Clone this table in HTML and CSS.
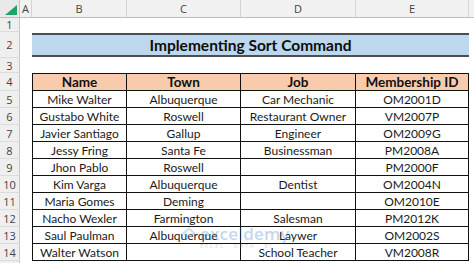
FILE: index.html
```html
<!DOCTYPE html>
<html>
<head>
<meta charset="utf-8">
<link rel="stylesheet" href="styles.css">
</head>
<body>
<div class="sheet">
  <div class="corner"><svg class="tri" width="12" height="10" viewBox="0 0 12 10"><polygon points="12,0 12,10 0,10" fill="#21a366"/></svg></div>
  <div class="ch">A</div><div class="ch">B</div><div class="ch">C</div><div class="ch">D</div><div class="ch">E</div><div class="ch last"></div>

  <div class="rh">1</div><div class="blank full"></div>

  <div class="rh">2</div><div class="blank"></div><div class="title-cell"><div class="title">Implementing Sort Command</div></div><div class="blank"></div>

  <div class="rh">3</div><div class="blank full"></div>

  <div class="rh">4</div><div class="blank"></div>
  <div class="th first">Name</div><div class="th">Town</div><div class="th">Job</div><div class="th">Membership ID</div><div class="blank"></div>

  <div class="rh">5</div><div class="blank"></div>
  <div class="td first">Mike Walter</div><div class="td">Albuquerque</div><div class="td">Car Mechanic</div><div class="td">OM2001D</div><div class="blank"></div>
  <div class="rh">6</div><div class="blank"></div>
  <div class="td first">Gustabo White</div><div class="td">Roswell</div><div class="td">Restaurant Owner</div><div class="td">VM2007P</div><div class="blank"></div>
  <div class="rh">7</div><div class="blank"></div>
  <div class="td first">Javier Santiago</div><div class="td">Gallup</div><div class="td">Engineer</div><div class="td">OM2009G</div><div class="blank"></div>
  <div class="rh">8</div><div class="blank"></div>
  <div class="td first">Jessy Fring</div><div class="td">Santa Fe</div><div class="td">Businessman</div><div class="td">PM2008A</div><div class="blank"></div>
  <div class="rh">9</div><div class="blank"></div>
  <div class="td first">Jhon Pablo</div><div class="td">Roswell</div><div class="td"></div><div class="td">PM2000F</div><div class="blank"></div>
  <div class="rh">10</div><div class="blank"></div>
  <div class="td first">Kim Varga</div><div class="td">Albuquerque</div><div class="td">Dentist</div><div class="td">OM2004N</div><div class="blank"></div>
  <div class="rh">11</div><div class="blank"></div>
  <div class="td first">Maria Gomes</div><div class="td">Deming</div><div class="td"></div><div class="td">OM2010E</div><div class="blank"></div>
  <div class="rh">12</div><div class="blank"></div>
  <div class="td first">Nacho Wexler</div><div class="td">Farmington</div><div class="td">Salesman</div><div class="td">PM2012K</div><div class="blank"></div>
  <div class="rh">13</div><div class="blank"></div>
  <div class="td first">Saul Paulman</div><div class="td">Albuquerque</div><div class="td">Laywer</div><div class="td">OM2002S</div><div class="blank"></div>
  <div class="rh">14</div><div class="blank"></div>
  <div class="td first">Walter Watson</div><div class="td"></div><div class="td">School Teacher</div><div class="td">VM2008R</div><div class="blank"></div>
  <div class="rh"></div><div class="blank full"></div>

  <div class="watermark">
    <svg class="wm-icon" width="18" height="16" viewBox="0 0 18 16"><path d="M2 8 L9 2 L16 8 L9 14 Z" fill="#6f9fd6"/><path d="M6 8 L9 5 L12 8 L9 11 Z" fill="#ffffff"/></svg>
    <div class="wm-text"><span class="wm-name">exceldemy</span><span class="wm-sub">EXCEL · DATA · BI</span></div>
  </div>
</div>
</body>
</html>
```
FILE: styles.css
```css
html, body {
  margin: 0;
  padding: 0;
  background: #ffffff;
  overflow: hidden;
}
.sheet {
  position: relative;
  display: grid;
  grid-template-columns: 20px 12px 95px 114px 115px 113px 5px;
  grid-template-rows: 18px 14px 26px 15px 18px repeat(10, 17px) 10px;
  width: 474px;
  font-family: Lato, "Open Sans", sans-serif;
  color: #111;
}
.corner {
  background: #e9e9e9;
  border-right: 1px solid #c6c6c6;
  border-bottom: 1px solid #bdbdbd;
  display: flex;
  align-items: flex-end;
  justify-content: flex-end;
  padding: 0 2px 2px 0;
}
.ch {
  background: #f1f1f1;
  border-right: 1px solid #d4d4d4;
  border-bottom: 1px solid #bdbdbd;
  font-size: 11px;
  color: #444;
  display: flex;
  align-items: center;
  justify-content: center;
  font-family: "Open Sans", sans-serif;
}
.ch.last { border-right: none; }
.rh {
  grid-column: 1;
  background: #efefef;
  border-right: 1px solid #c6c6c6;
  border-bottom: 1px solid #dcdcdc;
  font-size: 11px;
  color: #444;
  display: flex;
  align-items: center;
  justify-content: center;
  font-family: "Open Sans", sans-serif;
}
.blank { background: #fff; }
.blank.full { grid-column: 2 / 8; }
.title-cell {
  grid-column: 3 / 7;
  display: flex;
  padding-top: 1px;
  padding-bottom: 1px;
}
.title {
  flex: 1;
  background: #bdd7ee;
  border-top: 2px solid #4d4d4d;
  border-bottom: 2px solid #4d4d4d;
  font-weight: 700;
  font-size: 15.5px;
  display: flex;
  align-items: center;
  justify-content: center;
  color: #0d0d0d;
}
.th, .td {
  border-right: 1px solid #111;
  border-bottom: 1px solid #111;
  display: flex;
  align-items: center;
  justify-content: center;
  white-space: nowrap;
}
.first { border-left: 1px solid #111; }
.th {
  background: #f8cbad;
  border-top: 1px solid #111;
  font-weight: 700;
  font-size: 13.5px;
}
.td {
  font-size: 12px;
  background: #fff;
  color: #1a1a1a;
}
.watermark {
  position: absolute;
  left: 180px;
  top: 225px;
  display: flex;
  align-items: flex-start;
  gap: 2px;
  opacity: 0.3;
  pointer-events: none;
}
.wm-text {
  display: flex;
  flex-direction: column;
  line-height: 1;
}
.wm-name {
  font-family: "Open Sans", sans-serif;
  font-size: 17px;
  font-weight: 600;
  color: #3f7bc4;
  letter-spacing: 0.2px;
}
.wm-sub {
  font-family: "Open Sans", sans-serif;
  font-size: 6px;
  color: #7a8a99;
  letter-spacing: 1.5px;
  margin-top: 1px;
}
```
